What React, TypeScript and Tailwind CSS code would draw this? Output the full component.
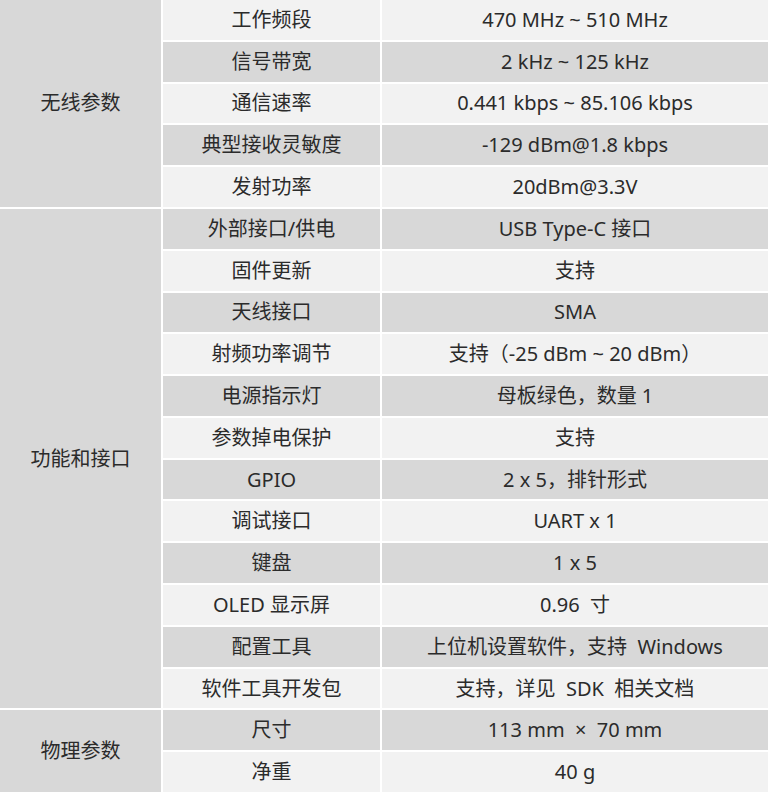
import React from "react";

const rows: [string, string][] = [
  ["工作频段", "470 MHz ~ 510 MHz"],
  ["信号带宽", "2 kHz ~ 125 kHz"],
  ["通信速率", "0.441 kbps ~ 85.106 kbps"],
  ["典型接收灵敏度", "-129 dBm@1.8 kbps"],
  ["发射功率", "20dBm@3.3V"],
  ["外部接口/供电", "USB Type-C 接口"],
  ["固件更新", "支持"],
  ["天线接口", "SMA"],
  ["射频功率调节", "支持（-25 dBm ~ 20 dBm）"],
  ["电源指示灯", "母板绿色，数量 1"],
  ["参数掉电保护", "支持"],
  ["GPIO", "2 x 5，排针形式"],
  ["调试接口", "UART x 1"],
  ["键盘", "1 x 5"],
  ["OLED 显示屏", "0.96  寸"],
  ["配置工具", "上位机设置软件，支持  Windows"],
  ["软件工具开发包", "支持，详见  SDK  相关文档"],
  ["尺寸", "113 mm  ×  70 mm"],
  ["净重", "40 g"],
];

const groups = [
  { name: "无线参数", cls: "row-start-1 row-span-5" },
  { name: "功能和接口", cls: "row-start-6 row-span-12" },
  { name: "物理参数", cls: "row-start-18 row-span-2" },
];

const rowStart = [
  "row-start-1", "row-start-2", "row-start-3", "row-start-4", "row-start-5",
  "row-start-6", "row-start-7", "row-start-8", "row-start-9", "row-start-10",
  "row-start-11", "row-start-12", "row-start-13", "row-start-14", "row-start-15",
  "row-start-16", "row-start-17", "row-start-18", "row-start-19",
];

export default function App() {
  return (
    <div
      className="w-[768px] h-[792px] bg-white grid grid-cols-[161px_217px_1fr] grid-rows-[repeat(19,minmax(0,1fr))] gap-[2px] text-[#2b2b2b] text-[20px] overflow-hidden"
      style={{ fontFamily: '"Noto Sans", "Noto Sans CJK SC", sans-serif' }}
    >
      {groups.map((g) => (
        <div
          key={g.name}
          className={`col-start-1 ${g.cls} bg-[#d8d8d8] flex items-center justify-center`}
        >
          {g.name}
        </div>
      ))}
      {rows.map(([k, v], i) => {
        const bg = i % 2 === 0 ? "bg-[#f2f2f2]" : "bg-[#d8d8d8]";
        return (
          <React.Fragment key={i}>
            <div className={`col-start-2 ${rowStart[i]} ${bg} flex items-center justify-center whitespace-pre`}>
              {k}
            </div>
            <div className={`col-start-3 ${rowStart[i]} ${bg} flex items-center justify-center whitespace-pre`}>
              {v}
            </div>
          </React.Fragment>
        );
      })}
    </div>
  );
}
